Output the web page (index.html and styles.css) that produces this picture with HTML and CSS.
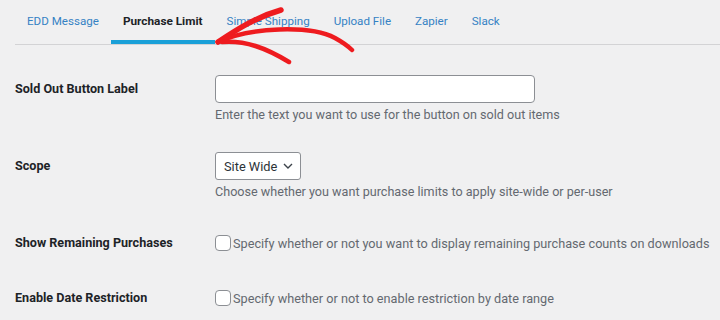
FILE: index.html
```html
<!DOCTYPE html>
<html lang="en">

<head>
  <meta charset="UTF-8">
  <title>Purchase Limit settings</title>
  <link rel="stylesheet" href="styles.css">
</head>

<body>
  <main class="settings">
    <nav class="tabs">
      <a href="#" class="tab">EDD Message</a>
      <a href="#" class="tab tab-active">Purchase Limit</a>
      <a href="#" class="tab">Simple Shipping</a>
      <a href="#" class="tab">Upload File</a>
      <a href="#" class="tab">Zapier</a>
      <a href="#" class="tab">Slack</a>
    </nav>

    <form class="form-table">
      <div class="row">
        <label class="row-label" for="sold-out">Sold Out Button Label</label>
        <div class="row-field">
          <input type="text" id="sold-out" class="text-input">
          <p class="description">Enter the text you want to use for the button on sold out items</p>
        </div>
      </div>

      <div class="row">
        <label class="row-label">Scope</label>
        <div class="row-field">
          <div class="select">
            <span>Site Wide</span>
            <svg width="10" height="6" viewBox="0 0 10 6" aria-hidden="true">
              <path d="M1 1l4 4 4-4" fill="none" stroke="#3c434a" stroke-width="1.4" />
            </svg>
          </div>
          <p class="description">Choose whether you want purchase limits to apply site-wide or per-user</p>
        </div>
      </div>

      <div class="row">
        <label class="row-label">Show Remaining Purchases</label>
        <div class="row-field">
          <label class="check">
            <input type="checkbox" class="checkbox">
            Specify whether or not you want to display remaining purchase counts on downloads
          </label>
        </div>
      </div>

      <div class="row">
        <label class="row-label">Enable Date Restriction</label>
        <div class="row-field">
          <label class="check">
            <input type="checkbox" class="checkbox">
            Specify whether or not to enable restriction by date range
          </label>
        </div>
      </div>
    </form>

    <!-- hand drawn annotation -->
    <svg class="annotation" width="720" height="80" viewBox="0 0 720 80" aria-hidden="true">
      <g fill="none" stroke="#ee1b1f" stroke-linecap="round" stroke-linejoin="round">
        <path d="M218 42 C 236 30, 256 17, 281 10" stroke-width="5.5" />
        <path d="M218 42 C 250 27, 310 25, 335 38 C 344 43, 349 47, 352 50" stroke-width="4.5" />
        <path d="M222 42 C 245 40, 266 48, 289 62" stroke-width="4.5" />
      </g>
    </svg>
  </main>
</body>

</html>
```

FILE: styles.css
```css
*,
*::before,
*::after {
  box-sizing: border-box;
}

body,
p {
  margin: 0;
  padding: 0;
}

:root {
  /* COLORS */
  --bg: #f0f0f1;
  --text-dark: #1d2327;
  --text-muted: #646970;
  --link: #3582c4;
  --accent: #1aa0d8;
  --border: #8c8f94;
  --line: #d3d3d5;

  --ff-primary: Roboto, "Liberation Sans", sans-serif;
}

body {
  font-family: var(--ff-primary);
  font-size: 12.6px;
  color: var(--text-dark);
  background-color: var(--bg);
}

.settings {
  position: relative;

  min-height: 320px;
  padding-left: 15px;
}

/* TABS */
.tabs {
  display: flex;

  height: 45px;

  border-bottom: 1px solid var(--line);
}

.tab {
  padding: 11px 12px 13px;

  font-size: 11.6px;
  line-height: 20px;
  text-decoration: none;

  color: var(--link);
}

.tab-active {
  font-size: 11.8px;
  font-weight: 700;

  color: var(--text-dark);
  box-shadow: inset 0 -4px 0 var(--accent);
}

/* FORM */
.form-table {
  display: flex;
  flex-direction: column;
  gap: 27px;

  padding-top: 30px;
}

.row {
  display: grid;
  grid-template-columns: 200px 1fr;
  align-items: start;
}

.row-label {
  font-weight: 700;
  line-height: 28px;
}

.text-input {
  display: block;

  width: 320px;
  height: 28px;

  border: 1px solid var(--border);
  border-radius: 4px;

  background-color: #fff;
}

.select {
  display: inline-flex;
  align-items: center;
  gap: 6px;

  height: 28px;
  padding: 0 7px 0 8px;

  border: 1px solid var(--border);
  border-radius: 3px;

  font-size: 12.8px;
  color: #2c3338;
  background-color: #fff;
}

.description {
  margin-top: 2px;

  line-height: 20px;

  color: var(--text-muted);
}

.check {
  display: flex;
  align-items: center;
  gap: 2px;

  height: 28px;

  font-size: 12.7px;
  white-space: nowrap;
  color: var(--text-muted);
}

.checkbox {
  appearance: none;

  width: 16px;
  height: 16px;
  margin: 0;

  border: 1px solid var(--border);
  border-radius: 4px;

  background-color: #fff;
}

/* ANNOTATION */
.annotation {
  position: absolute;
  top: 0;
  left: 0;

  pointer-events: none;
}
```
